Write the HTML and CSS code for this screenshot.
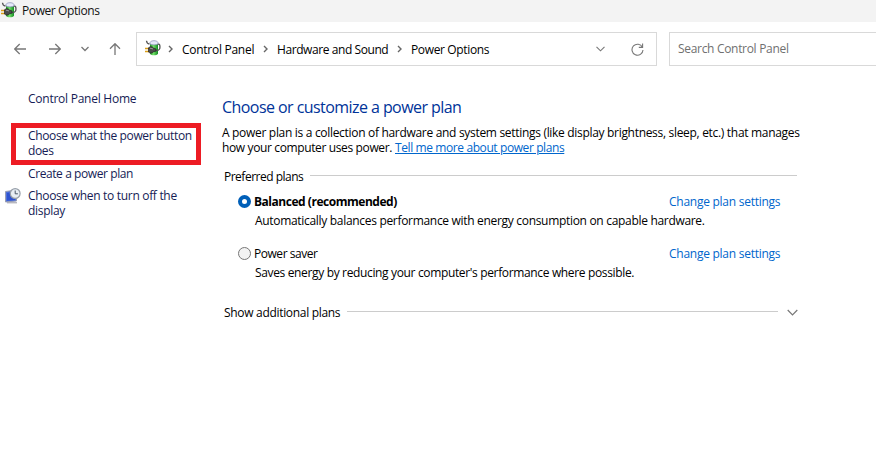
FILE: index.html
```html
<!DOCTYPE html>
<html lang="en">
<head>
<meta charset="utf-8">
<title>Power Options</title>
<link rel="stylesheet" href="styles.css">
</head>
<body>
<svg class="defs" width="0" height="0">
  <defs>
    <linearGradient id="cell" x1="0" x2="1"><stop offset="0" stop-color="#178c20"/><stop offset=".4" stop-color="#77e56b"/><stop offset="1" stop-color="#128b22"/></linearGradient>
    <symbol id="power" viewBox="0 0 16 16">
      <path d="M5 3.2v10.5c1.5 2 6.5 2 8 0V3.2z" fill="url(#cell)"/>
      <path d="M5 4V2.5C6 .1 12 .1 13 2.5V4c-2 1.2-6 1.2-8 0z" fill="#e4e8f8" stroke="#7478a8" stroke-width=".6"/>
      <path d="M1.5.7c.2 2 1 3 3 3.5M10.5 10.5c4 .5 5-2 4.2-5.5-.3-1-1.2-1.1-1.5-.2" fill="none" stroke="#555" stroke-width="1.3"/>
      <path d="M0 8.5h4M0 11.5h4" stroke="#dc9f18" stroke-width="1.3"/>
      <path d="M3.5 7.8C5 6.3 7.5 6.5 8.3 7.9l2.7 1.1v2.1l-2.7.8C7.4 13.4 5 13.5 3.5 12z" fill="#4b4b4b" stroke="#222" stroke-width=".7"/>
      <path d="M5 8.2l3 .7" stroke="#999" stroke-width="1"/>
    </symbol>
  </defs>
</svg>
<header class="titlebar"><svg class="app-icon"><use href="#power"/></svg><span class="title">Power Options</span></header>
<nav class="toolbar">
  <div class="nav-buttons">
    <svg width="12" height="12" viewBox="0 0 12 12"><path d="M12 6H.8M5.7 1L.7 6l5 5"/></svg>
    <svg class="forward" width="12" height="12" viewBox="0 0 12 12"><path d="M0 6h11.2M6.3 1l5 5-5 5"/></svg>
    <svg class="recent" width="8" height="6" viewBox="0 0 8 6"><path d="M.5 1L4 4.5 7.5 1"/></svg>
    <svg class="up" width="12" height="12" viewBox="0 0 12 12"><path d="M6 12V.8M1 5.7L6 .7l5 5"/></svg>
  </div>
  <div class="address">
    <svg class="address-icon"><use href="#power"/></svg>
    <svg class="crumb-arrow" width="5" height="8" viewBox="0 0 5 8"><path d="M1 1l3 3-3 3"/></svg>
    <span class="crumb crumb-root">Control Panel</span>
    <svg class="crumb-arrow" width="5" height="8" viewBox="0 0 5 8"><path d="M1 1l3 3-3 3"/></svg>
    <span class="crumb crumb-group">Hardware and Sound</span>
    <svg class="crumb-arrow" width="5" height="8" viewBox="0 0 5 8"><path d="M1 1l3 3-3 3"/></svg>
    <span class="crumb crumb-page">Power Options</span>
    <svg class="drop" width="9" height="6" viewBox="0 0 9 6"><path d="M.5 .8l4 4 4-4"/></svg>
    <svg class="refresh" width="13" height="13" viewBox="0 0 13 13"><path d="M11.4 4.2A5.5 5.5 0 1 0 12 7M11.6.6v3.8H7.8"/></svg>
  </div>
  <div class="search"><span>Search Control Panel</span></div>
</nav>
<div class="body">
  <aside class="sidebar">
    <a class="home">Control Panel Home</a>
    <a class="marked">Choose what the power button<br>does</a>
    <a class="create">Create a power plan</a>
    <div class="display-task">
      <svg width="16" height="16" viewBox="0 0 16 16"><path d="M.5 3.5l11-1.5v11L.5 14z" fill="#4d70dc" stroke="#9a9eb0"/><path d="M2 5l8-1v8l-8 .8z" fill="#2f53cf"/><path d="M2 14.8h10" stroke="#9b9ba5"/><circle cx="10.2" cy="5.5" r="4.9" fill="#e8eef4" stroke="#979fa9" stroke-width="1.2"/><path d="M10.2 2.5v3.3h2.7" fill="none" stroke="#4b5866" stroke-width="1"/></svg>
      <a>Choose when to turn off the<br>display</a>
    </div>
  </aside>
  <main class="content">
    <h1>Choose or customize a power plan</h1>
    <div class="intro">
      <p>A power plan is a collection of hardware and system settings (like display brightness, sleep, etc.) that manages</p>
      <p class="intro-end"><span class="uses">how your computer uses power.</span><a class="learn">Tell me more about power plans</a></p>
    </div>
    <div class="divider preferred"><span>Preferred plans</span><i></i></div>
    <section class="plan">
      <div class="plan-head"><i class="radio selected"></i><b>Balanced (recommended)</b><a>Change plan settings</a></div>
      <p class="balanced-note">Automatically balances performance with energy consumption on capable hardware.</p>
    </section>
    <section class="plan">
      <div class="plan-head"><i class="radio"></i><span class="saver">Power saver</span><a>Change plan settings</a></div>
      <p class="saver-note">Saves energy by reducing your computer's performance where possible.</p>
    </section>
    <div class="divider additional"><span>Show additional plans</span><i></i><svg width="11" height="7" viewBox="0 0 11 7"><path d="M.7 1l4.8 4.8L10.3 1"/></svg></div>
  </main>
</div>
</body>
</html>
```
FILE: styles.css
```css
* { box-sizing: border-box; }
body { margin: 0; width: 876px; height: 457px; overflow: hidden; background: #fff; color: #000; font: 12px/15px "Open Sans", "Noto Sans", sans-serif; letter-spacing: -.31px; white-space: nowrap; }
.defs { position: absolute; }
p, h1 { margin: 0; font-weight: 400; }
svg { flex: none; }
.titlebar { height: 22px; background: #f3f3f3; display: flex; align-items: flex-start; color: #111; padding-top: 3px; }
.app-icon { width: 16px; height: 16px; margin: -1px 5px 0 1px; }
.title { letter-spacing: -.4px; }
.toolbar { height: 54px; display: flex; align-items: flex-start; padding-top: 10px; }
.nav-buttons { flex: none; width: 136px; height: 34px; padding-left: 14px; display: flex; align-items: center; fill: none; stroke: #777; stroke-width: 1.3; }
.forward { margin-left: 23px; }
.recent { margin-left: 20px; }
.up { margin-left: 20px; }
.address { flex: none; width: 521px; height: 34px; border: 1px solid #d9d9d9; display: flex; align-items: center; padding-left: 8px; }
.address-icon { width: 16px; height: 16px; margin: -2px 7px 0 0; }
.crumb-arrow { fill: none; stroke: #666; stroke-width: 1.4; }
.crumb { margin-left: 9px; flex: none; }
.crumb-root { width: 81px; letter-spacing: -.27px; }
.crumb-group { width: 120px; letter-spacing: -.42px; }
.crumb-page { width: 185px; letter-spacing: -.36px; }
.drop, .refresh { fill: none; stroke: #777; stroke-width: 1.1; }
.refresh { margin-left: 26px; }
.search { flex: none; width: 220px; height: 34px; margin-left: 12px; border: 1px solid #d9d9d9; padding: 8px; color: #707070; }
.body { display: flex; }
.sidebar { width: 222px; padding-top: 15px; color: #151c55; display: flex; flex-direction: column; }
.home { margin-left: 28px; letter-spacing: -.25px; }
.marked { margin: 17px 0 0 11px; width: 190px; height: 42px; border: 5px solid #ed1c24; padding-left: 12px; letter-spacing: -.35px; line-height: 15px; }
.marked { padding-top: 0; }
.create { margin: 1px 0 0 28px; letter-spacing: -.41px; }
.display-task { display: flex; margin: 7px 0 0 5px; gap: 7px; }
.content { width: 578px; padding-top: 21px; }
h1 { font-size: 16px; line-height: 20px; color: #003399; letter-spacing: -.56px; }
.intro { margin-top: 8px; }
.intro-end { display: flex; }
.uses { width: 173px; letter-spacing: -.37px; }
.learn { color: #0066cc; text-decoration: underline; letter-spacing: -.4px; }
.divider { display: flex; align-items: center; margin-left: 2px; }
.divider i { height: 1px; background: #ccc; margin-top: -2px; }
.preferred { margin-top: 14px; }
.preferred span { width: 86px; letter-spacing: -.5px; }
.preferred i { width: 487px; }
.plan { margin-left: 16px; height: 52px; }
.preferred + .plan { margin-top: 10px; }
.plan-head { display: flex; align-items: center; height: 15px; margin-top: 0; }
.plan-head > :not(.radio) { margin-top: -1px; }
.plan-head b { letter-spacing: -.47px; }
.saver { letter-spacing: -.46px; }
.plan-head a { margin-left: auto; width: 131px; color: #0066cc; letter-spacing: -.26px; }
.radio { width: 13px; height: 13px; border: 1px solid #777; border-radius: 50%; background: #f3f3f3; margin-right: 3px; }
.radio.selected { border: 4px solid #005fb8; background: #fff; }
.plan p { margin: 4px 0 0 17px; }
.saver-note { letter-spacing: -.35px; }
.additional { margin-top: 7px; }
.additional span { width: 123px; }
.additional i { width: 431px; }
.additional svg { margin: -1px 0 0 9px; fill: none; stroke: #777; stroke-width: 1.2; }
```
